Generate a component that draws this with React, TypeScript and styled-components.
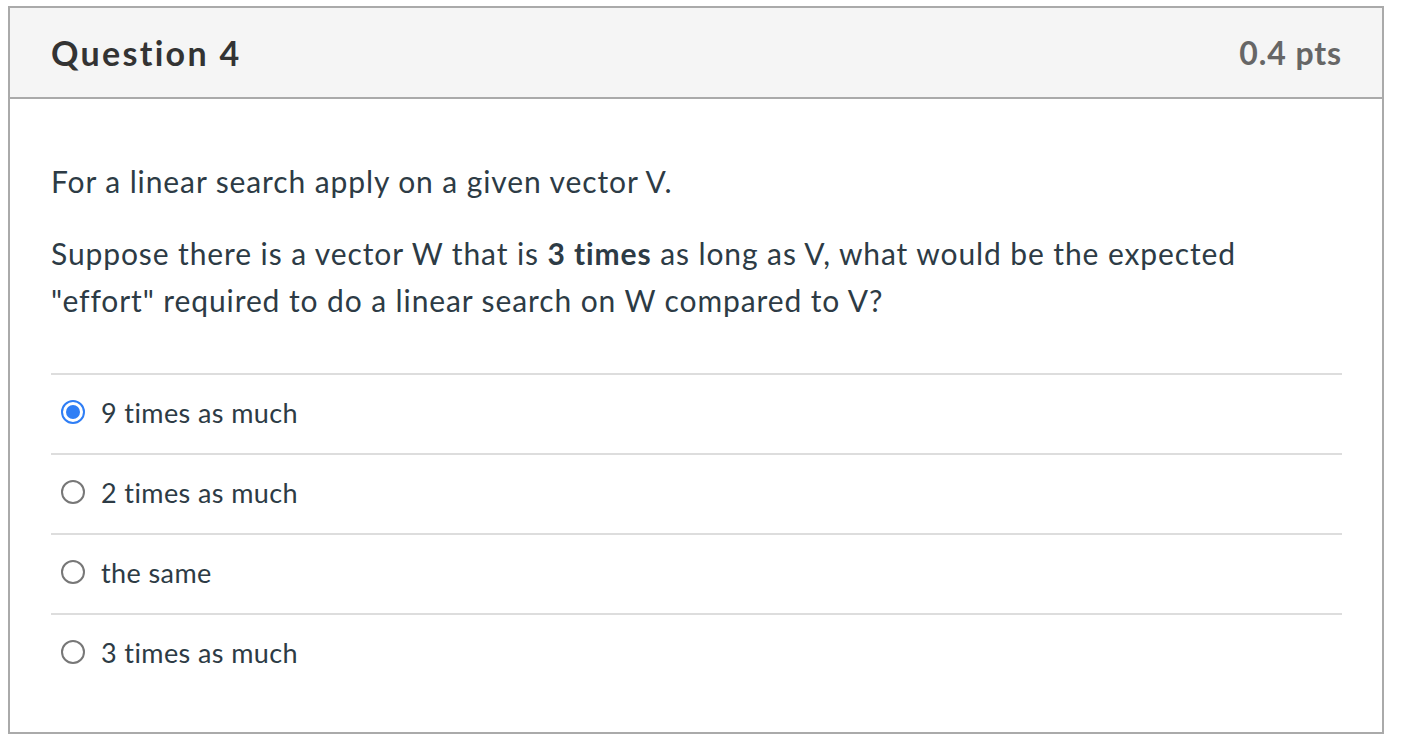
import React from "react";
import styled, { createGlobalStyle } from "styled-components";

const Global = createGlobalStyle`
  html, body { margin: 0; padding: 0; background: #fff; }
  body { font-family: Lato, "Open Sans", sans-serif; color: #2d3b45; }
`;

const Page = styled.div`
  padding: 6px 18px 0 8px;
`;

const Card = styled.section`
  border: 2px solid #aaaaaa;
  width: 1376px;
  box-sizing: border-box;
`;

const Header = styled.header`
  display: flex;
  align-items: center;
  justify-content: space-between;
  height: 89px;
  padding: 0 40px 0 41px;
  background: #f5f5f5;
  border-bottom: 2px solid #aaaaaa;
`;

const Title = styled.h2`
  margin: 0;
  font-family: Lato, sans-serif;
  font-weight: 700;
  font-size: 34px;
  letter-spacing: 2.3px;
  color: #333333;
`;

const Points = styled.div`
  font-family: Lato, sans-serif;
  font-weight: 700;
  font-size: 32px;
  letter-spacing: 0.9px;
  color: #666666;
`;

const Body = styled.div`
  padding: 59px 40px 39px 41px;
`;

const Para = styled.p`
  margin: 0 0 25px;
  font-size: 30px;
  letter-spacing: 0.9px;
  line-height: 47px;
  color: #2d3b45;
`;

const Answers = styled.div`
  margin-top: 49px;
`;

const Row = styled.label`
  box-sizing: border-box;
  display: flex;
  align-items: center;
  gap: 16px;
  height: 80px;
  padding: 0 0 4px 10px;
  border-top: 2px solid #dddddd;
  font-size: 27px;
  letter-spacing: 0.4px;
  color: #2d3b45;
`;

const Radio = styled.span<{ $checked?: boolean }>`
  box-sizing: border-box;
  width: 24px;
  height: 24px;
  border-radius: 50%;
  border: ${(p) => (p.$checked ? "2px solid #2f7ef5" : "2px solid #777777")};
  display: flex;
  align-items: center;
  justify-content: center;
  &::after {
    content: "";
    width: 14px;
    height: 14px;
    border-radius: 50%;
    background: ${(p) => (p.$checked ? "#2f7ef5" : "transparent")};
  }
`;

const answers = [
  { text: "9 times as much", checked: true },
  { text: "2 times as much", checked: false },
  { text: "the same", checked: false },
  { text: "3 times as much", checked: false },
];

export default function App() {
  return (
    <>
      <Global />
      <Page>
        <Card>
          <Header>
            <Title>Question 4</Title>
            <Points>0.4 pts</Points>
          </Header>
          <Body>
            <Para>For a linear search apply on a given vector V.</Para>
            <Para>
              Suppose there is a vector W that is <strong>3 times</strong> as long as V, what would be the expected
              "effort" required to do a linear search on W compared to V?
            </Para>
            <Answers>
              {answers.map((a) => (
                <Row key={a.text}>
                  <Radio $checked={a.checked} />
                  {a.text}
                </Row>
              ))}
            </Answers>
          </Body>
        </Card>
      </Page>
    </>
  );
}
